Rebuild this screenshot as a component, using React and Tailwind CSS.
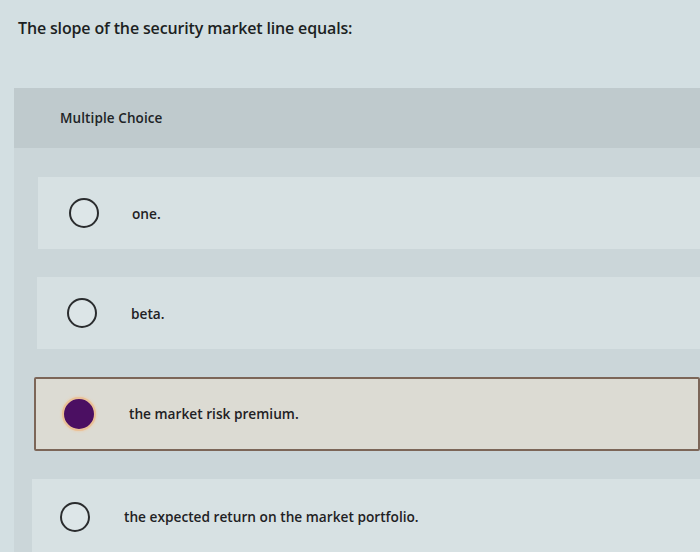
export default function App() {
  const font = { fontFamily: '"Open Sans", Lato, sans-serif' };
  return (
    <div className="w-[700px] h-[552px] overflow-hidden bg-[#d3dfe2] text-[#1a1c1e]" style={font}>
      <div className="pl-[18px] pt-[16px] h-[88px]">
        <h1 className="text-[16px] font-semibold leading-[24px] tracking-[-0.15px] text-[#1c1f22]">
          The slope of the security market line equals:
        </h1>
      </div>
      <div className="ml-[14px] bg-[#c9d4d7]">
        <div className="h-[60px] bg-[#bfcacd] pl-[46px] flex items-center">
          <span className="text-[13.5px] font-semibold text-[#202326] tracking-[0.1px]">Multiple Choice</span>
        </div>
        <div className="flex flex-col pt-[29px] gap-[28px] bg-[#cbd6d9]">
          <div className="ml-[24px] h-[72px] bg-[#d7e1e3] flex items-center pl-[31px]">
            <span className="w-[30px] h-[30px] rounded-full border-2 border-[#2a2c2e] bg-[#dde6e8]" />
            <span className="ml-[33px] mt-[3px] text-[13.7px] font-semibold text-[#1f2124]">one.</span>
          </div>
          <div className="ml-[23px] h-[72px] bg-[#d6e0e2] flex items-center pl-[30px]">
            <span className="w-[30px] h-[30px] rounded-full border-2 border-[#2a2c2e] bg-[#dce5e7]" />
            <span className="ml-[34px] mt-[2px] text-[13.7px] font-semibold text-[#1f2124]">beta.</span>
          </div>
          <div className="ml-[20px] h-[74px] bg-[#dcdbd3] border-2 border-[#7c6658] rounded-[2px] flex items-center pl-[26px]">
            <span className="w-[34px] h-[34px] rounded-full bg-[#4b0f62] border-2 border-[#e9c096] shadow-[0_0_3px_#f0c9a0]" />
            <span className="ml-[33px] text-[13.7px] font-semibold text-[#1f2124]">the market risk premium.</span>
          </div>
          <div className="ml-[18px] h-[76px] bg-[#d7e1e3] flex items-center pl-[28px]">
            <span className="w-[30px] h-[30px] rounded-full border-2 border-[#2a2c2e] bg-[#dde6e8]" />
            <span className="ml-[34px] text-[13.7px] font-semibold text-[#1f2124]">the expected return on the market portfolio.</span>
          </div>
        </div>
      </div>
    </div>
  );
}
